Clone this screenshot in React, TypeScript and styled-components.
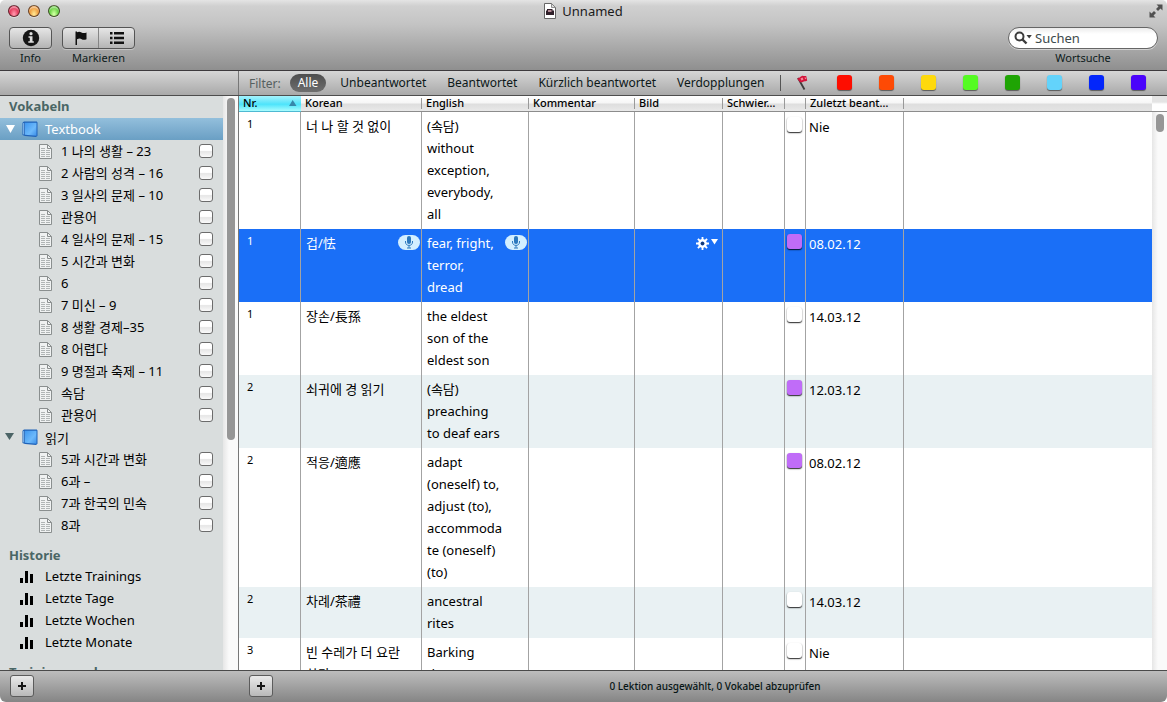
import React from "react";
import styled, { createGlobalStyle } from "styled-components";

const GlobalStyle = createGlobalStyle`
  * { box-sizing: border-box; }
  html, body, #root { height: 100%; }
  body {
    margin: 0;
    background: #fff;
    color: #000;
    font-family: "Noto Sans", "Noto Sans CJK KR", sans-serif;
    font-size: 13px;
    overflow: hidden;
  }
  button, input { font: inherit; color: inherit; margin: 0; }
  button { padding: 0; border: 0; background: none; }
`;

const Window = styled.div`
  height: 100vh;
  display: flex;
  flex-direction: column;
  border-radius: 5px 5px 6px 6px;
  overflow: hidden;
`;

const Toolbar = styled.header`
  flex: none;
  height: 71px;
  padding: 0 9px;
  border-bottom: 1px solid #3d3a3d;
  background: linear-gradient(#e4e4e4 0, #d0d0d0 6px, #c4c4c4 24px, #8f8f8f 100%);
`;

const TitleRow = styled.div`
  height: 22px;
  display: grid;
  grid-template-columns: 1fr auto 1fr;
  align-items: center;
  margin: 0 -5px;
`;

const Lights = styled.div`
  display: flex;
  gap: 8px;
  padding-left: 4px;
`;

const Light = styled.button<{ $from: string; $to: string }>`
  width: 12px;
  height: 12px;
  border-radius: 50%;
  border: 1px solid rgba(50, 30, 30, 0.7);
  background: radial-gradient(ellipse at 50% 85%, ${(p) => p.$to} 10%, ${(p) => p.$from} 75%);
  box-shadow: inset 0 2px 1px rgba(255, 255, 255, 0.45), 0 1px 0 rgba(255, 255, 255, 0.4);
`;

const Title = styled.h1`
  display: flex;
  align-items: center;
  gap: 6px;
  margin: 0;
  font-size: 13px;
  font-weight: 400;
  line-height: 20px;
  color: #1a1a1a;
`;

const FullScreen = styled.button`
  justify-self: end;
  width: 14px;
  height: 14px;
  display: flex;
`;

const ToolRow = styled.div`
  display: flex;
  padding-top: 5px;
`;

const Tool = styled.div`
  display: flex;
  flex-direction: column;
  align-items: center;
  margin-right: 10px;
  &:last-child {
    margin: 0 0 0 auto;
  }
`;

const Caption = styled.span`
  font-size: 11px;
  line-height: 18px;
  color: #0c1a1a;
`;

const ButtonGroup = styled.div`
  display: flex;
  height: 22px;
  border: 1px solid #555;
  border-radius: 4px;
  background: linear-gradient(#e6e6e6, #b4b4b4);
  box-shadow: 0 1px 0 rgba(255, 255, 255, 0.35);
`;

const ToolButton = styled.button<{ $wide?: boolean }>`
  width: ${(p) => (p.$wide ? 41 : 35)}px;
  height: 20px;
  display: flex;
  align-items: center;
  justify-content: center;
  & + & {
    border-left: 1px solid #858585;
    width: 36px;
  }
`;

const SearchBox = styled.label`
  width: 150px;
  height: 22px;
  display: flex;
  align-items: center;
  gap: 3px;
  padding: 0 8px 0 5px;
  border: 1px solid #666;
  border-radius: 11px;
  background: linear-gradient(#ececec, #fff 6px);
  box-shadow: 0 1px 0 rgba(255, 255, 255, 0.5);
`;

const SearchInput = styled.input`
  flex: 1;
  min-width: 0;
  height: 20px;
  padding: 0;
  border: 0;
  outline: 0;
  background: transparent;
  &::placeholder {
    color: #3d4a4c;
    opacity: 1;
  }
`;

const FilterBar = styled.nav`
  flex: none;
  height: 25px;
  display: flex;
  background: linear-gradient(#d6d6d6, #a9a9a9);
  border-bottom: 1px solid #4d4d4d;
`;

const FilterSpacer = styled.div`
  flex: none;
  width: 239px;
  border-right: 1px solid #777;
`;

const Filters = styled.div`
  flex: 1;
  display: flex;
  align-items: center;
  padding: 0 21px 0 10px;
  font-size: 12px;
`;

const FilterLabel = styled.span`
  color: #56605f;
  margin-right: 9px;
`;

const FilterButton = styled.button<{ $active?: boolean }>`
  height: 18px;
  padding: 0 ${(p) => (p.$active ? 8 : 0)}px;
  margin-right: ${(p) => (p.$active ? 14 : 21)}px;
  border-radius: 9px;
  line-height: 18px;
  white-space: nowrap;
  color: ${(p) => (p.$active ? "#fff" : "#0c1818")};
  background: ${(p) => (p.$active ? "linear-gradient(#4e4e4e, #6e6e6e)" : "none")};
  &:last-of-type {
    margin-right: 0;
  }
`;

const Swatches = styled.div`
  flex: none;
  display: flex;
  align-items: flex-start;
  gap: 27px;
  margin-left: auto;
  padding-left: 15px;
  border-left: 1px solid #555;
  height: 16px;
`;

const Swatch = styled.button<{ $color: string }>`
  display: block;
  width: 15px;
  height: 15px;
  border-radius: 3px;
  background: ${(p) => p.$color};
  box-shadow: 0 1px 1px rgba(0, 0, 0, 0.5);
`;

const Mark = styled(Swatch)`
  box-shadow: 0 1px 1px rgba(0, 0, 0, 0.7), 0 1px 2px rgba(0, 0, 0, 0.3);
`;

const FlagButton = styled.button`
  width: 14px;
  height: 15px;
  display: flex;
`;

const Main = styled.div`
  flex: 1;
  min-height: 0;
  display: flex;
`;

const Sidebar = styled.aside`
  flex: none;
  width: 239px;
  display: flex;
  overflow: hidden;
  border-right: 1px solid #777;
`;

const SidebarList = styled.div`
  flex: 1;
  background: #d9dddd;
`;

const Section = styled.section`
  margin-bottom: 9px;
`;

const SectionTitle = styled.h2`
  margin: 0;
  padding-left: 9px;
  font-size: 13px;
  line-height: 20px;
  font-weight: 700;
  color: #4a6665;
`;

const BookList = styled.div`
  padding-top: 2px;
`;

const ItemRow = styled.div<{ $selected?: boolean; $depth: number }>`
  height: 22px;
  display: flex;
  align-items: center;
  padding: 0 10px 0 ${(p) => [5, 20, 39][p.$depth]}px;
  color: ${(p) => (p.$selected ? "#fff" : "#000")};
  background: ${(p) =>
    p.$selected ? "linear-gradient(#93bfdc, #6a9fc4)" : "transparent"};
`;

const ItemIcon = styled.span<{ $gap: number }>`
  display: flex;
  margin-right: ${(p) => p.$gap}px;
`;

const ItemLabel = styled.label`
  flex: 1;
  line-height: 22px;
  white-space: nowrap;
`;

const CheckBox = styled.input`
  appearance: none;
  width: 14px;
  height: 14px;
  border: 1px solid #6c6c6c;
  border-radius: 3px;
  background: linear-gradient(#fff 45%, #e6e6e6 55%, #fafafa);
`;

const ScrollColumn = styled.div`
  flex: none;
  width: 15px;
  display: flex;
  flex-direction: column;
`;

const ScrollCorner = styled.div`
  flex: none;
  height: 16px;
  border-bottom: 1px solid #8c8c8c;
  background: linear-gradient(#e4e4e4 6px, #fff 8px);
`;

const ScrollTrack = styled.div`
  flex: 1;
  padding: 2px 3px;
  background: linear-gradient(90deg, #e6e6e6, #fafafa 40%);
`;

const ScrollThumb = styled.div<{ $size: string }>`
  width: 8px;
  margin-left: 1px;
  height: ${(p) => p.$size};
  border-radius: 4px;
  background: #969696;
`;

const Content = styled.main`
  flex: 1;
  min-width: 0;
  display: flex;
  overflow: hidden;
`;

const TablePane = styled.div`
  flex: 1;
  min-width: 0;
  overflow: hidden;
`;

const Table = styled.table`
  width: 100%;
  table-layout: fixed;
  border-collapse: separate;
  border-spacing: 0;
`;

const HeadCell = styled.th<{ $sorted?: boolean }>`
  height: 16px;
  padding: 0 4px 1px;
  border-bottom: 1px solid ${(p) => (p.$sorted ? "#4fb9d2" : "#8c8c8c")};
  font-size: 11px;
  line-height: 14px;
  font-weight: 500;
  text-align: left;
  white-space: nowrap;
  overflow: hidden;
  text-overflow: ellipsis;
  background: ${(p) =>
    p.$sorted
      ? "linear-gradient(#a5f3fd, #5fe6fb 45%, #4de4fb 55%, #a9fdff)"
      : "linear-gradient(#999, #999) right 2px / 1px 11px no-repeat, linear-gradient(#fff 0, #f6f6f6 45%, #dedede 55%, #e9e9e9)"};
  &:last-child {
    background: linear-gradient(#fff 0, #f6f6f6 45%, #dedede 55%, #e4e4e4);
  }
`;

const SortHead = styled.div`
  display: flex;
  justify-content: space-between;
  align-items: center;
`;

const Row = styled.tr<{ $selected?: boolean; $tinted?: boolean }>`
  color: ${(p) => (p.$selected ? "#fff" : "#000")};
  background: ${(p) => (p.$selected ? "#1a6ff7" : p.$tinted ? "#e9f1f3" : "#fff")};
`;

const Cell = styled.td`
  padding: 3px 0 4px 5px;
  border-right: 1px solid #a3a3a3;
  vertical-align: top;
  line-height: 22px;
  white-space: pre-line;
  &:last-child {
    border-right: 0;
  }
`;

const NumberCell = styled(Cell)`
  padding-left: 8px;
  padding-top: 1px;
  font-size: 11px;
`;

const DateCell = styled(Cell)`
  padding: 4px 0 0 3px;
`;

const MarkCell = styled(Cell)`
  padding: 5px 2px 0;
`;

const CellLine = styled.div`
  display: flex;
  justify-content: space-between;
  padding-right: 1px;
`;

const SpeakButton = styled.button`
  flex: none;
  width: 22px;
  height: 15px;
  margin-top: 3px;
  display: flex;
  align-items: center;
  justify-content: center;
  border-radius: 8px;
  background: #d3efff;
`;

const ActionButton = styled.button`
  display: flex;
  align-items: center;
  gap: 2px;
  height: 22px;
  margin: 0 4px 0 auto;
`;

const Footer = styled.footer`
  flex: none;
  height: 32px;
  display: flex;
  align-items: center;
  padding: 0 10px 2px;
  border-top: 1px solid #4a4a4a;
  background: linear-gradient(#bdbdbd, #858585);
`;

const AddArea = styled.div`
  flex: none;
  width: 239px;
`;

const AddButton = styled.button`
  width: 24px;
  height: 22px;
  display: flex;
  align-items: center;
  justify-content: center;
  border: 1px solid #5c5c5c;
  border-radius: 3px;
  background: linear-gradient(#eaeaea, #b9b9b9);
`;

const Status = styled.p`
  flex: 1;
  margin: 0;
  font-size: 10px;
  font-weight: 500;
  line-height: 20px;
  text-align: center;
  color: #061414;
`;

const DocIcon = () => (
  <svg width="12" height="16" viewBox="0 0 12 16" aria-hidden="true">
    <path d="M.5.5h7l4 4v11H.5z" fill="#fff" stroke="#666" />
    <path d="M7.500.5v4h4z" fill="#ddd" stroke="#777" strokeWidth=".8" />
    <path d="M3 6h5.500v1.500H10V12H2V7.500h1z" fill="#30202a" />
    <path d="M4 7h3.500v2H4z" fill="#b48a94" />
  </svg>
);

const ExpandIcon = () => (
  <svg width="14" height="14" viewBox="0 0 14 14" aria-hidden="true">
    <path d="M7.500.5h6v6l-2-2L9 7 7 5l2.500-2.500z" fill="#505050" />
    <path d="M6.500 13.500h-6v-6l2 2L5 7l2 2-2.500 2.500z" fill="#505050" />
  </svg>
);

const InfoIcon = () => (
  <svg width="18" height="18" viewBox="0 0 18 18" aria-hidden="true">
    <circle cx="9" cy="9" r="8.200" fill="#161616" />
    <circle cx="9" cy="4.700" r="1.600" fill="#ddd" />
    <path d="M6.500 7.300h4v5h1.300v1.500H6.300v-1.500h1.500V8.800H6.500z" fill="#ddd" />
  </svg>
);

const FlagIcon = () => (
  <svg width="12" height="14" viewBox="0 0 12 14" aria-hidden="true">
    <path d="M.500.5h1.500V14H.5z" fill="#111" />
    <path d="M2 1.200c2-1 3.300-.5 4.500.2s3 .9 5 .1v6.700c-2 .8-3.600.7-4.800 0S4 7.300 2 8.300z" fill="#111" />
  </svg>
);

const ListIcon = () => (
  <svg width="14" height="12" viewBox="0 0 14 12" fill="#111" aria-hidden="true">
    <path d="M0 0h2.500v2.400H0zM4 0h10v2.400H4zM0 4.800h2.500v2.400H0zM4 4.800h10v2.400H4zM0 9.600h2.500V12H0zM4 9.600h10V12H4z" />
  </svg>
);

const SearchIcon = () => (
  <svg width="18" height="14" viewBox="0 0 18 14" aria-hidden="true">
    <circle cx="5.500" cy="5.500" r="4" fill="none" stroke="#3c3c3c" strokeWidth="2" />
    <path d="M8.500 8.500l4 4" stroke="#3c3c3c" strokeWidth="2.400" />
    <path d="M12.500 4h5.300l-2.600 3.600z" fill="#3c3c3c" />
  </svg>
);

const RedFlagIcon = () => (
  <svg width="14" height="15" viewBox="0 0 14 15" aria-hidden="true">
    <path d="M2 3l6.500 11.500" stroke="#3c3c3c" strokeWidth="1.800" />
    <path d="M1 3.500C3 3.800 3.800 1.500 5.800.9c1.500-.3 2.200.6 4.400 0l1 4.600c-1 .9-2 .5-3.200.9C6.500 6.900 5.800 7.600 4 7.300z" fill="#d3143a" />
    <path d="M4.500 3.500l2-1 1 2-2 1zM8.500 2.500l1-.3.700 1.500-1 .5z" fill="#f58a9a" />
  </svg>
);

const BookIcon = () => (
  <svg width="16" height="17" viewBox="0 0 16 17" aria-hidden="true">
    <defs>
      <linearGradient id="cover" x1="0" y1="0" x2="1" y2="1">
        <stop offset="0" stopColor="#3f97ef" />
        <stop offset=".6" stopColor="#6cb9fb" />
        <stop offset="1" stopColor="#3d8fe8" />
      </linearGradient>
    </defs>
    <path d="M.5 1.700L2 .5h12.800l.7 1v13.300l-1.500 1.200L3 15 .5 14z" fill="#1f62b8" />
    <path d="M3 1.800h11.500v12.900L3 13.700z" fill="url(#cover)" />
    <path d="M1.300 2.300l.9-.6v12l-.9-.4z" fill="#9fcdf6" />
  </svg>
);

const PageIcon = () => (
  <svg width="14" height="15" viewBox="0 0 14 15" aria-hidden="true">
    <path d="M.5.5h8l4 4v10H.5z" fill="#f0f2f2" stroke="#8a8f8f" />
    <path d="M8.500.5v4h4" fill="none" stroke="#8a8f8f" />
    <path
      d="M2 4.500h4M2 6.500h4M7 6.500h4M2 8.500h4M7 8.500h4M2 10.500h4M7 10.500h4M2 12.500h4M7 12.500h4"
      stroke="#b0b5b5"
      fill="none"
    />
  </svg>
);

const BarsIcon = () => (
  <svg width="13" height="13" viewBox="0 0 13 13" aria-hidden="true">
    <path d="M0 8h3v5H0zM5 1h3v12H5zM10 4h3v9h-3z" fill="#000" />
  </svg>
);

const Disclosure = ({ light }: { light?: boolean }) => (
  <svg width="10" height="8" viewBox="0 0 10 8" aria-hidden="true">
    <path d={light ? "M1 0h9L5.500 8z" : "M0 0h9L4.500 7z"} fill={light ? "#fff" : "#4c6466"} />
  </svg>
);

const SortIcon = () => (
  <svg width="8" height="6" viewBox="0 0 8 6" aria-hidden="true">
    <path d="M0 6h7.500L3.700 0z" fill="#3787ab" />
  </svg>
);

const MicIcon = () => (
  <svg width="10" height="13" viewBox="0 0 10 13" aria-hidden="true">
    <rect x="3" y="0" width="4" height="8" rx="2" fill="#2b78bd" />
    <path d="M1.500 5v1c0 2.200 1.500 3.400 3.500 3.400S8.500 8.200 8.500 6V5M5 9.500v2.300M3 12h4" fill="none" stroke="#2b78bd" />
  </svg>
);

const GearIcon = () => (
  <svg width="13" height="13" viewBox="0 0 13 13" aria-hidden="true">
    <circle cx="6.500" cy="6.500" r="3.200" fill="none" stroke="#fff" strokeWidth="2.400" />
    <path d="M6.500 0v3M6.500 10v3M0 6.500h3M10 6.500h3M1.900 1.900L4 4M9 9l2.100 2.100M11.100 1.900L9 4M4 9l-2.100 2.100" stroke="#fff" strokeWidth="1.800" />
    <circle cx="6.500" cy="6.500" r="1.700" fill="#173a72" />
  </svg>
);

const MenuArrow = () => (
  <svg width="7" height="8" viewBox="0 0 7 8" aria-hidden="true">
    <path d="M0 0h7L3.500 5.500z" fill="#fff" />
  </svg>
);

const PlusIcon = () => (
  <svg width="8" height="8" viewBox="0 0 8 8" aria-hidden="true">
    <path d="M3 0h2v3h3v2H5v3H3V5H0V3h3z" fill="#161616" />
  </svg>
);

type Book = { name: string; selected?: boolean; lessons: string[] };

const books: Book[] = [
  {
    name: "Textbook",
    selected: true,
    lessons: [
      "1 나의 생활 – 23",
      "2 사람의 성격 – 16",
      "3 일사의 문제 – 10",
      "관용어",
      "4 일사의 문제 – 15",
      "5 시간과 변화",
      "6",
      "7 미신 – 9",
      "8 생활 경제–35",
      "8 어렵다",
      "9 명절과 축제 – 11",
      "속담",
      "관용어",
    ],
  },
  { name: "읽기", lessons: ["5과 시간과 변화", "6과 –", "7과 한국의 민속", "8과"] },
];

const history = ["Letzte Trainings", "Letzte Tage", "Letzte Wochen", "Letzte Monate"];

const filters = ["Alle", "Unbeantwortet", "Beantwortet", "Kürzlich beantwortet", "Verdopplungen"];

const labelColors = [
  ["Rot", "#fe0d00"],
  ["Orange", "#fe4a05"],
  ["Gelb", "#fed90c"],
  ["Hellgrün", "#55fb23"],
  ["Grün", "#1fa404"],
  ["Hellblau", "#63d3fb"],
  ["Blau", "#0326fb"],
  ["Violett", "#4a03fb"],
];

const columnWidths = [62, 121, 107, 106, 88, 62, 21, 98];

type Word = {
  nr: number;
  korean: string;
  english: string;
  mark: string;
  date: string;
  selected?: boolean;
};

const lilac = "#c06cf8";

const words: Word[] = [
  { nr: 1, korean: "너 나 할 것 없이", english: "(속담)\nwithout\nexception,\neverybody,\nall", mark: "#fff", date: "Nie" },
  { nr: 1, korean: "겁/怯", english: "fear, fright,\nterror,\ndread", mark: lilac, date: "08.02.12", selected: true },
  { nr: 1, korean: "장손/長孫", english: "the eldest\nson of the\neldest son", mark: "#fff", date: "14.03.12" },
  { nr: 2, korean: "쇠귀에 경 읽기", english: "(속담)\npreaching\nto deaf ears", mark: lilac, date: "12.03.12" },
  { nr: 2, korean: "적응/適應", english: "adapt\n(oneself) to,\nadjust (to),\naccommoda\nte (oneself)\n(to)", mark: lilac, date: "08.02.12" },
  { nr: 2, korean: "차례/茶禮", english: "ancestral\nrites", mark: "#fff", date: "14.03.12" },
  { nr: 3, korean: "빈 수레가 더 요란\n하다", english: "Barking\ndogs\nseldom bite", mark: "#fff", date: "Nie" },
];

const Speakable = ({ text, active }: { text: string; active?: boolean }) => (
  <CellLine>
    <span>{text}</span>
    {active && (
      <SpeakButton aria-label="Vorlesen">
        <MicIcon />
      </SpeakButton>
    )}
  </CellLine>
);

export default function App() {
  return (
    <Window>
      <GlobalStyle />
      <Toolbar>
        <TitleRow>
          <Lights>
            <Light aria-label="Schließen" $from="#d81f45" $to="#ff8fa5" />
            <Light aria-label="Minimieren" $from="#e8892a" $to="#ffe08a" />
            <Light aria-label="Zoomen" $from="#4fc52c" $to="#c8ff9a" />
          </Lights>
          <Title>
            <DocIcon />
            Unnamed
          </Title>
          <FullScreen aria-label="Vollbild">
            <ExpandIcon />
          </FullScreen>
        </TitleRow>
        <ToolRow>
          <Tool>
            <ButtonGroup>
              <ToolButton $wide aria-label="Info">
                <InfoIcon />
              </ToolButton>
            </ButtonGroup>
            <Caption>Info</Caption>
          </Tool>
          <Tool>
            <ButtonGroup>
              <ToolButton aria-label="Markieren">
                <FlagIcon />
              </ToolButton>
              <ToolButton aria-label="Liste">
                <ListIcon />
              </ToolButton>
            </ButtonGroup>
            <Caption>Markieren</Caption>
          </Tool>
          <Tool>
            <SearchBox>
              <SearchIcon />
              <SearchInput type="text" placeholder="Suchen" aria-label="Wortsuche" />
            </SearchBox>
            <Caption>Wortsuche</Caption>
          </Tool>
        </ToolRow>
      </Toolbar>

      <FilterBar>
        <FilterSpacer />
        <Filters>
          <FilterLabel>Filter:</FilterLabel>
          {filters.map((name, i) => (
            <FilterButton key={name} $active={i === 0}>
              {name}
            </FilterButton>
          ))}
          <Swatches>
            <FlagButton aria-label="Markierung">
              <RedFlagIcon />
            </FlagButton>
            {labelColors.map(([name, color]) => (
              <Swatch key={name} aria-label={name} $color={color} />
            ))}
          </Swatches>
        </Filters>
      </FilterBar>

      <Main>
        <Sidebar>
          <SidebarList>
            <Section>
              <SectionTitle>Vokabeln</SectionTitle>
              <BookList>
                {books.map((book, b) => (
                  <React.Fragment key={book.name}>
                    <ItemRow $depth={0} $selected={book.selected}>
                      <ItemIcon $gap={7}>
                        <Disclosure light={book.selected} />
                      </ItemIcon>
                      <ItemIcon $gap={7}>
                        <BookIcon />
                      </ItemIcon>
                      <span>{book.name}</span>
                    </ItemRow>
                    {book.lessons.map((lesson, i) => (
                      <ItemRow key={i} $depth={2}>
                        <ItemIcon $gap={8}>
                          <PageIcon />
                        </ItemIcon>
                        <ItemLabel htmlFor={`lesson-${b}-${i}`}>{lesson}</ItemLabel>
                        <CheckBox type="checkbox" id={`lesson-${b}-${i}`} />
                      </ItemRow>
                    ))}
                  </React.Fragment>
                ))}
              </BookList>
            </Section>
            <Section>
              <SectionTitle>Historie</SectionTitle>
              {history.map((entry) => (
                <ItemRow key={entry} $depth={1}>
                  <ItemIcon $gap={12}>
                    <BarsIcon />
                  </ItemIcon>
                  <span>{entry}</span>
                </ItemRow>
              ))}
            </Section>
            <Section>
              <SectionTitle>Trainingsmodus</SectionTitle>
            </Section>
          </SidebarList>
          <ScrollColumn>
            <ScrollTrack>
              <ScrollThumb $size="60%" />
            </ScrollTrack>
          </ScrollColumn>
        </Sidebar>

        <Content>
          <TablePane>
            <Table>
              <colgroup>
                {columnWidths.map((width, i) => (
                  <col key={i} width={width} />
                ))}
                <col />
              </colgroup>
              <thead>
                <tr>
                  <HeadCell $sorted>
                    <SortHead>
                      Nr. <SortIcon />
                    </SortHead>
                  </HeadCell>
                  <HeadCell>Korean</HeadCell>
                  <HeadCell>English</HeadCell>
                  <HeadCell>Kommentar</HeadCell>
                  <HeadCell>Bild</HeadCell>
                  <HeadCell>Schwier…</HeadCell>
                  <HeadCell />
                  <HeadCell>Zuletzt beant…</HeadCell>
                  <HeadCell />
                </tr>
              </thead>
              <tbody>
                {words.map((word, i) => (
                  <Row key={i} $selected={word.selected} $tinted={i % 2 === 1}>
                    <NumberCell>{word.nr}</NumberCell>
                    <Cell>
                      <Speakable text={word.korean} active={word.selected} />
                    </Cell>
                    <Cell>
                      <Speakable text={word.english} active={word.selected} />
                    </Cell>
                    <Cell />
                    <Cell>
                      {word.selected && (
                        <ActionButton aria-label="Bildaktionen">
                          <GearIcon />
                          <MenuArrow />
                        </ActionButton>
                      )}
                    </Cell>
                    <Cell />
                    <MarkCell>
                      <Mark aria-label="Etikett" $color={word.mark} />
                    </MarkCell>
                    <DateCell>{word.date}</DateCell>
                    <Cell />
                  </Row>
                ))}
              </tbody>
            </Table>
          </TablePane>
          <ScrollColumn>
            <ScrollCorner />
            <ScrollTrack>
              <ScrollThumb $size="18px" />
            </ScrollTrack>
          </ScrollColumn>
        </Content>
      </Main>

      <Footer>
        <AddArea>
          <AddButton aria-label="Lektion hinzufügen">
            <PlusIcon />
          </AddButton>
        </AddArea>
        <AddButton aria-label="Vokabel hinzufügen">
          <PlusIcon />
        </AddButton>
        <Status>0 Lektion ausgewählt, 0 Vokabel abzuprüfen</Status>
      </Footer>
    </Window>
  );
}
